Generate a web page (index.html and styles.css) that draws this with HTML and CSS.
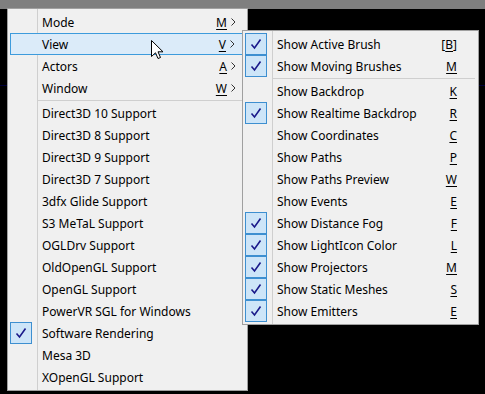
FILE: index.html
```html
<!DOCTYPE html>
<html>
<head>
<meta charset="utf-8">
<link rel="stylesheet" href="styles.css">
</head>
<body>
<div class="screen">
  <div class="topbar"></div>
  <div class="viewport"></div>

  <div class="menu main-menu">
    <div class="item"><span class="chk"></span><span class="label">Mode</span><span class="key"><u>M</u></span><span class="arrow"><svg width="5" height="8" viewBox="0 0 5 8"><path d="M0.5 0.5 L4 4 L0.5 7.5" fill="none" stroke="#333" stroke-width="1"/></svg></span></div>
    <div class="item hot"><span class="chk"></span><span class="label">View</span><span class="key"><u>V</u></span><span class="arrow"><svg width="5" height="8" viewBox="0 0 5 8"><path d="M0.5 0.5 L4 4 L0.5 7.5" fill="none" stroke="#333" stroke-width="1"/></svg></span></div>
    <div class="item"><span class="chk"></span><span class="label">Actors</span><span class="key"><u>A</u></span><span class="arrow"><svg width="5" height="8" viewBox="0 0 5 8"><path d="M0.5 0.5 L4 4 L0.5 7.5" fill="none" stroke="#333" stroke-width="1"/></svg></span></div>
    <div class="item"><span class="chk"></span><span class="label">Window</span><span class="key"><u>W</u></span><span class="arrow"><svg width="5" height="8" viewBox="0 0 5 8"><path d="M0.5 0.5 L4 4 L0.5 7.5" fill="none" stroke="#333" stroke-width="1"/></svg></span></div>
    <div class="sep"></div>
    <div class="item"><span class="chk"></span><span class="label">Direct3D 10 Support</span></div>
    <div class="item"><span class="chk"></span><span class="label">Direct3D 8 Support</span></div>
    <div class="item"><span class="chk"></span><span class="label">Direct3D 9 Support</span></div>
    <div class="item"><span class="chk"></span><span class="label">Direct3D 7 Support</span></div>
    <div class="item"><span class="chk"></span><span class="label">3dfx Glide Support</span></div>
    <div class="item"><span class="chk"></span><span class="label">S3 MeTaL Support</span></div>
    <div class="item"><span class="chk"></span><span class="label">OGLDrv Support</span></div>
    <div class="item"><span class="chk"></span><span class="label">OldOpenGL Support</span></div>
    <div class="item"><span class="chk"></span><span class="label">OpenGL Support</span></div>
    <div class="item"><span class="chk"></span><span class="label">PowerVR SGL for Windows</span></div>
    <div class="item"><span class="chk on"><svg width="12" height="12" viewBox="0 0 12 12"><path d="M1.5 6.5 L4.5 10 L10.5 1.5" fill="none" stroke="#1a1a8a" stroke-width="1.6"/></svg></span><span class="label">Software Rendering</span></div>
    <div class="item"><span class="chk"></span><span class="label">Mesa 3D</span></div>
    <div class="item"><span class="chk"></span><span class="label">XOpenGL Support</span></div>
  </div>

  <div class="menu sub-menu">
    <div class="item"><span class="chk on"><svg width="12" height="12" viewBox="0 0 12 12"><path d="M1.5 6.5 L4.5 10 L10.5 1.5" fill="none" stroke="#1a1a8a" stroke-width="1.6"/></svg></span><span class="label">Show Active Brush</span><span class="key">[<u>B</u>]</span></div>
    <div class="item"><span class="chk on"><svg width="12" height="12" viewBox="0 0 12 12"><path d="M1.5 6.5 L4.5 10 L10.5 1.5" fill="none" stroke="#1a1a8a" stroke-width="1.6"/></svg></span><span class="label">Show Moving Brushes</span><span class="key"><u>M</u></span></div>
    <div class="sep"></div>
    <div class="item"><span class="chk"></span><span class="label">Show Backdrop</span><span class="key"><u>K</u></span></div>
    <div class="item"><span class="chk on"><svg width="12" height="12" viewBox="0 0 12 12"><path d="M1.5 6.5 L4.5 10 L10.5 1.5" fill="none" stroke="#1a1a8a" stroke-width="1.6"/></svg></span><span class="label">Show Realtime Backdrop</span><span class="key"><u>R</u></span></div>
    <div class="item"><span class="chk"></span><span class="label">Show Coordinates</span><span class="key"><u>C</u></span></div>
    <div class="item"><span class="chk"></span><span class="label">Show Paths</span><span class="key"><u>P</u></span></div>
    <div class="item"><span class="chk"></span><span class="label">Show Paths Preview</span><span class="key"><u>W</u></span></div>
    <div class="item"><span class="chk"></span><span class="label">Show Events</span><span class="key"><u>E</u></span></div>
    <div class="item"><span class="chk on"><svg width="12" height="12" viewBox="0 0 12 12"><path d="M1.5 6.5 L4.5 10 L10.5 1.5" fill="none" stroke="#1a1a8a" stroke-width="1.6"/></svg></span><span class="label">Show Distance Fog</span><span class="key"><u>F</u></span></div>
    <div class="item"><span class="chk on"><svg width="12" height="12" viewBox="0 0 12 12"><path d="M1.5 6.5 L4.5 10 L10.5 1.5" fill="none" stroke="#1a1a8a" stroke-width="1.6"/></svg></span><span class="label">Show LightIcon Color</span><span class="key"><u>L</u></span></div>
    <div class="item"><span class="chk on"><svg width="12" height="12" viewBox="0 0 12 12"><path d="M1.5 6.5 L4.5 10 L10.5 1.5" fill="none" stroke="#1a1a8a" stroke-width="1.6"/></svg></span><span class="label">Show Projectors</span><span class="key"><u>M</u></span></div>
    <div class="item"><span class="chk on"><svg width="12" height="12" viewBox="0 0 12 12"><path d="M1.5 6.5 L4.5 10 L10.5 1.5" fill="none" stroke="#1a1a8a" stroke-width="1.6"/></svg></span><span class="label">Show Static Meshes</span><span class="key"><u>S</u></span></div>
    <div class="item"><span class="chk on"><svg width="12" height="12" viewBox="0 0 12 12"><path d="M1.5 6.5 L4.5 10 L10.5 1.5" fill="none" stroke="#1a1a8a" stroke-width="1.6"/></svg></span><span class="label">Show Emitters</span><span class="key"><u>E</u></span></div>
  </div>

  <svg class="cursor" width="13" height="20" viewBox="0 0 13 20"><path d="M0.5 0.5 L0.5 16.5 L4.5 12.8 L7 18.5 L9.5 17.5 L7 11.8 L12 11.8 Z" fill="#fff" stroke="#000" stroke-width="1" stroke-linejoin="miter"/></svg>
</div>
</body>
</html>
```

FILE: styles.css
```css
html, body {
  margin: 0;
  padding: 0;
  background: #000;
}
.screen {
  position: relative;
  width: 485px;
  height: 394px;
  overflow: hidden;
  background: #000;
  font-family: "Noto Sans", "Open Sans", sans-serif;
  font-size: 12px;
  color: #000;
}
.topbar {
  height: 9px;
  background: #7f7f7f;
}
.viewport {
  height: 385px;
  background:
    linear-gradient(#00003a, #00003a) 0 76px / 100% 1px no-repeat,
    #000;
}
.menu {
  position: absolute;
  box-sizing: border-box;
  border: 1px solid #a0a0a0;
  padding: 2px;
  display: flex;
  flex-direction: column;
  background:
    linear-gradient(to right, transparent 29px, #cfcfcf 29px, #cfcfcf 30px, transparent 30px),
    #f0f0f0;
}
.main-menu {
  left: 7px;
  top: 8px;
  width: 241px;
}
.sub-menu {
  left: 242px;
  top: 30px;
  width: 237px;
}
.item {
  height: 22px;
  display: flex;
  align-items: center;
  box-sizing: border-box;
  white-space: nowrap;
}
.item.hot {
  background: #dbebf9;
  border: 1px solid #3d9bdc;
}
.item.hot .chk {
  margin-left: -1px;
}
.chk {
  width: 22px;
  height: 22px;
  flex: none;
  box-sizing: border-box;
  display: flex;
  align-items: center;
  justify-content: center;
}
.chk.on {
  background: #cde5f8;
  border: 1px solid #3d8fd0;
}
.label {
  margin-left: 10px;
  flex: 1;
}
.key {
  flex: none;
}
.main-menu .key {
  margin-right: 4px;
}
.arrow {
  flex: none;
  width: 14px;
  display: flex;
  align-items: center;
}
.sub-menu .key {
  margin-right: 19px;
}
u {
  text-decoration: underline;
  text-underline-offset: 2px;
}
.sep {
  height: 1px;
  margin: 1px 0 1px 28px;
  background: #cfcfcf;
  flex: none;
}
.sub-menu .sep {
  margin-left: 27px;
  margin-right: 1px;
}
.cursor {
  position: absolute;
  left: 151px;
  top: 40px;
}
```
